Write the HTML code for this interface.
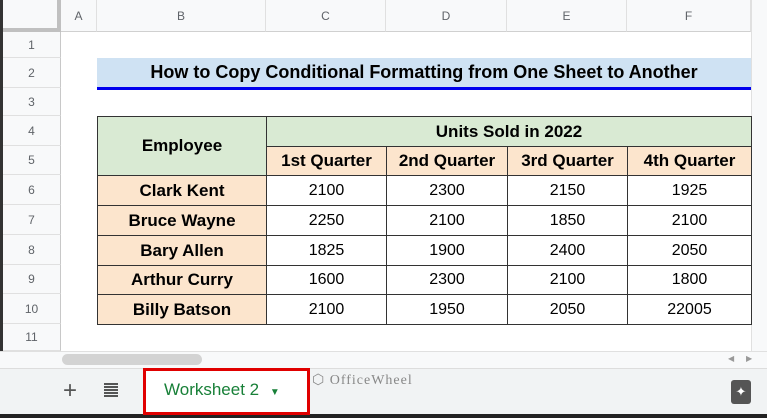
<!DOCTYPE html><html><head><style>
body{margin:0;width:767px;height:418px;overflow:hidden;background:#fff;font-family:"Liberation Sans",Arial,sans-serif;position:relative}
.a{position:absolute;box-sizing:border-box}
.ch{top:0;height:32px;background:#f8f9fa;border-right:1px solid #e0e0e0;border-bottom:1px solid #d0d0d0;color:#5f6368;font-size:12px;text-align:center;line-height:32px}
.rh{left:0;width:61px;background:#f8f9fa;border-bottom:1px solid #e0e0e0;border-right:1px solid #c8c8c8;color:#5f6368;font-size:12px;text-align:center}
.c{border:1px solid #333;font-size:16px;text-align:center;display:flex;align-items:center;justify-content:center;color:#000}
.b{font-weight:bold;font-size:17px}
.g{background:#d9ead3}.o{background:#fce5cd}
</style></head><body>
<div class="a" style="left:0;top:0;width:3px;height:368px;background:#333"></div>
<div class="a ch" style="left:3px;width:58px;border-right:4px solid #c0c0c0;border-bottom:4px solid #c0c0c0"></div>
<div class="a ch" style="left:61px;width:36px">A</div>
<div class="a ch" style="left:97px;width:169px">B</div>
<div class="a ch" style="left:266px;width:120px">C</div>
<div class="a ch" style="left:386px;width:121px">D</div>
<div class="a ch" style="left:507px;width:120px">E</div>
<div class="a ch" style="left:627px;width:124px">F</div>
<div class="a" style="left:751px;top:0;width:16px;height:368px;background:#f8f9fa;border-left:1px solid #e0e0e0"></div>
<div class="a rh" style="left:3px;width:58px;top:32px;height:26px;line-height:26px">1</div>
<div class="a rh" style="left:3px;width:58px;top:58px;height:30px;line-height:30px">2</div>
<div class="a rh" style="left:3px;width:58px;top:88px;height:28px;line-height:28px">3</div>
<div class="a rh" style="left:3px;width:58px;top:116px;height:30px;line-height:30px">4</div>
<div class="a rh" style="left:3px;width:58px;top:146px;height:29px;line-height:29px">5</div>
<div class="a rh" style="left:3px;width:58px;top:175px;height:30px;line-height:30px">6</div>
<div class="a rh" style="left:3px;width:58px;top:205px;height:30px;line-height:30px">7</div>
<div class="a rh" style="left:3px;width:58px;top:235px;height:30px;line-height:30px">8</div>
<div class="a rh" style="left:3px;width:58px;top:265px;height:29px;line-height:29px">9</div>
<div class="a rh" style="left:3px;width:58px;top:294px;height:30px;line-height:30px">10</div>
<div class="a rh" style="left:3px;width:58px;top:324px;height:27px;line-height:27px">11</div>
<div class="a" style="left:97px;top:58px;width:654px;height:29px;background:#cfe2f3;font-weight:bold;font-size:18px;text-align:center;line-height:29px">How to Copy Conditional Formatting from One Sheet to Another</div>
<div class="a" style="left:97px;top:87px;width:654px;height:3px;background:#0000ee"></div>

<div class="a c g b" style="left:97px;top:116px;width:170px;height:60px">Employee</div>
<div class="a c g b" style="left:266px;top:116px;width:486px;height:31px">Units Sold in 2022</div>
<div class="a c o b" style="left:266px;top:146px;width:121px;height:30px">1st Quarter</div>
<div class="a c o b" style="left:386px;top:146px;width:122px;height:30px">2nd Quarter</div>
<div class="a c o b" style="left:507px;top:146px;width:121px;height:30px">3rd Quarter</div>
<div class="a c o b" style="left:627px;top:146px;width:125px;height:30px">4th Quarter</div>

<div class="a c o b" style="left:97px;top:175px;width:170px;height:31px">Clark Kent</div>
<div class="a c" style="left:266px;top:175px;width:121px;height:31px">2100</div>
<div class="a c" style="left:386px;top:175px;width:122px;height:31px">2300</div>
<div class="a c" style="left:507px;top:175px;width:121px;height:31px">2150</div>
<div class="a c" style="left:627px;top:175px;width:125px;height:31px">1925</div>
<div class="a c o b" style="left:97px;top:205px;width:170px;height:31px">Bruce Wayne</div>
<div class="a c" style="left:266px;top:205px;width:121px;height:31px">2250</div>
<div class="a c" style="left:386px;top:205px;width:122px;height:31px">2100</div>
<div class="a c" style="left:507px;top:205px;width:121px;height:31px">1850</div>
<div class="a c" style="left:627px;top:205px;width:125px;height:31px">2100</div>
<div class="a c o b" style="left:97px;top:235px;width:170px;height:31px">Bary Allen</div>
<div class="a c" style="left:266px;top:235px;width:121px;height:31px">1825</div>
<div class="a c" style="left:386px;top:235px;width:122px;height:31px">1900</div>
<div class="a c" style="left:507px;top:235px;width:121px;height:31px">2400</div>
<div class="a c" style="left:627px;top:235px;width:125px;height:31px">2050</div>
<div class="a c o b" style="left:97px;top:265px;width:170px;height:30px">Arthur Curry</div>
<div class="a c" style="left:266px;top:265px;width:121px;height:30px">1600</div>
<div class="a c" style="left:386px;top:265px;width:122px;height:30px">2300</div>
<div class="a c" style="left:507px;top:265px;width:121px;height:30px">2100</div>
<div class="a c" style="left:627px;top:265px;width:125px;height:30px">1800</div>
<div class="a c o b" style="left:97px;top:294px;width:170px;height:31px">Billy Batson</div>
<div class="a c" style="left:266px;top:294px;width:121px;height:31px">2100</div>
<div class="a c" style="left:386px;top:294px;width:122px;height:31px">1950</div>
<div class="a c" style="left:507px;top:294px;width:121px;height:31px">2050</div>
<div class="a c" style="left:627px;top:294px;width:125px;height:31px">22005</div>

<div class="a" style="left:0;top:351px;width:767px;height:17px;background:#f8f9fa;border-top:1px solid #e0e0e0"></div>
<div class="a" style="left:62px;top:354px;width:140px;height:11px;background:#d3d3d3;border-radius:6px"></div>
<div class="a" style="left:728px;top:354px;width:12px;height:11px;color:#999;font-size:8px">◀</div>
<div class="a" style="left:746px;top:354px;width:12px;height:11px;color:#999;font-size:8px">▶</div>
<div class="a" style="left:0;top:368px;width:767px;height:50px;background:#f1f3f4;border-top:1px solid #ddd"></div>
<div class="a" style="left:0;top:414px;width:767px;height:4px;background:#222"></div>
<div class="a" style="left:63px;top:377px;font-size:24px;color:#555">+</div>
<div class="a" style="left:104px;top:383px;width:14px;height:14px;background:repeating-linear-gradient(#555 0 2px,transparent 2px 3px)"></div>
<div class="a" style="left:143px;top:368px;width:167px;height:47px;background:#fff;border:3px solid #e00000;color:#188038;font-size:17px;line-height:38px;padding-left:18px">Worksheet 2 <span style="font-size:10px;margin-left:6px">▼</span></div>
<div class="a" style="left:312px;top:372px;font-size:14px;color:#888;letter-spacing:1px;font-family:'Liberation Serif',serif">⬡ OfficeWheel</div>
<div class="a" style="left:731px;top:380px;width:20px;height:24px;background:#555;border-radius:3px;color:#fff;text-align:center;font-size:13px;line-height:24px">✦</div>
</body></html>
